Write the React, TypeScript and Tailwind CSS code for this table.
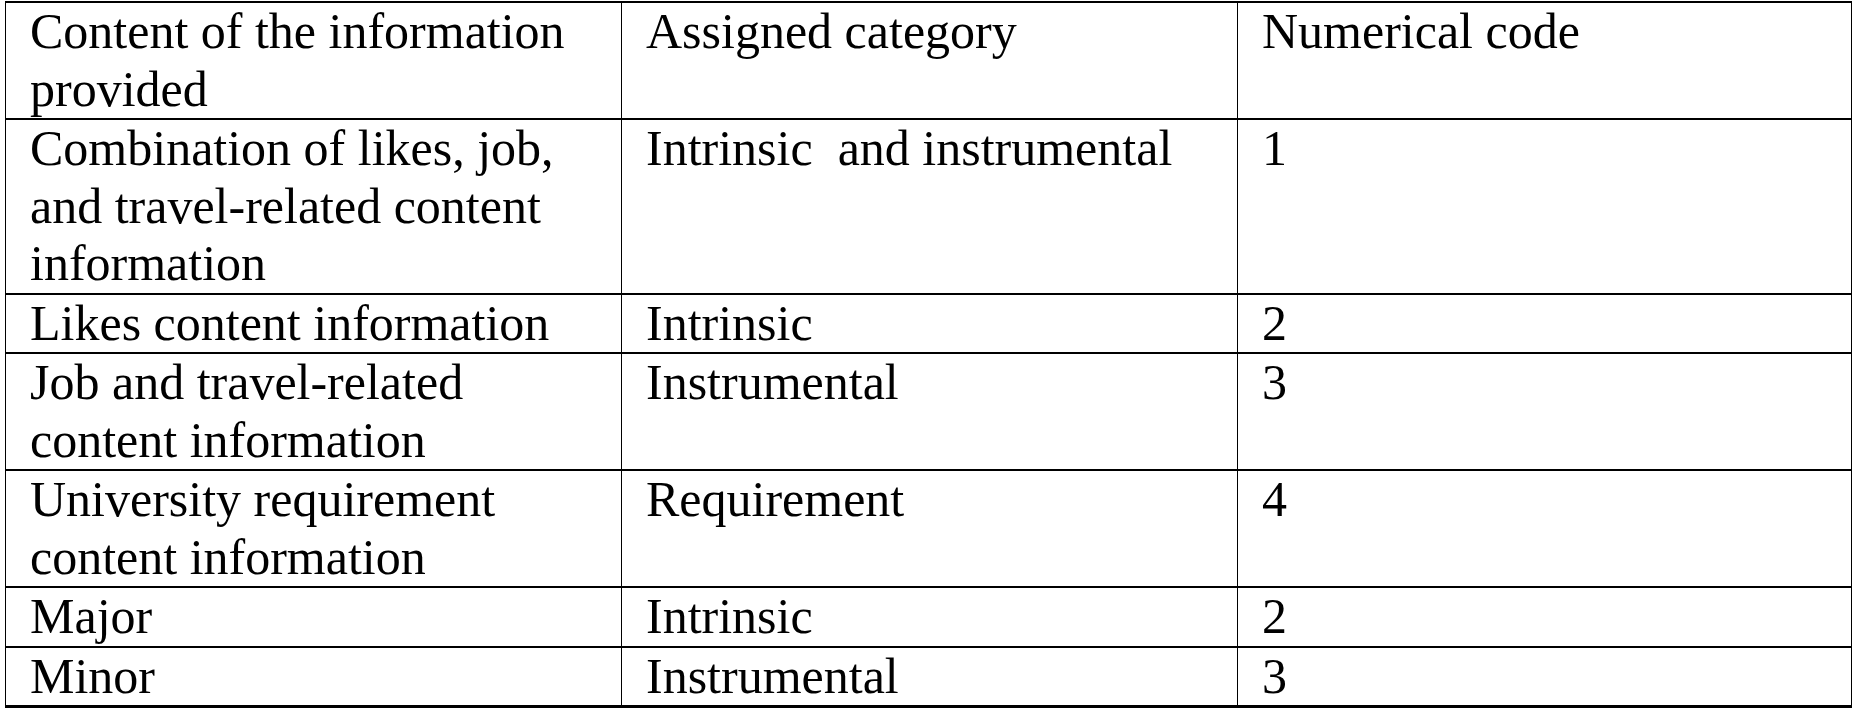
type Row = {
  content: string
  category: string
  code: string
}

const rows: Row[] = [
  { content: 'Combination of likes, job, and travel-related content information', category: 'Intrinsic\u00A0 and instrumental', code: '1' },
  { content: 'Likes content information', category: 'Intrinsic', code: '2' },
  { content: 'Job and travel-related content information', category: 'Instrumental', code: '3' },
  { content: 'University requirement content information', category: 'Requirement', code: '4' },
  { content: 'Major', category: 'Intrinsic', code: '2' },
  { content: 'Minor', category: 'Instrumental', code: '3' },
]

const cell = 'pl-6 pr-6'
const divider = 'border-l border-black pl-6 pr-6'

export default function App() {
  return (
    <main className="min-h-[711px] bg-white pt-px text-black font-['Liberation_Serif','Times_New_Roman',serif] text-[50px] leading-[57.5px]">
      <div className="ml-[5px] w-[1847px] border-l border-r border-black">
        <div className="grid grid-cols-[615px_616px_614px] border-t-2 border-black">
          <div className={cell}>Content of the information provided</div>
          <div className={divider}>Assigned category</div>
          <div className={divider}>Numerical code</div>
        </div>

        {rows.map((r, i) => (
          <div
            key={i}
            className={
              i === rows.length - 1
                ? 'grid grid-cols-[615px_616px_614px] border-t-2 border-b-[3px] border-black'
                : 'grid grid-cols-[615px_616px_614px] border-t-2 border-black'
            }
          >
            <div className={cell}>{r.content}</div>
            <div className={divider}>{r.category}</div>
            <div className={divider}>{r.code}</div>
          </div>
        ))}
      </div>
    </main>
  )
}
